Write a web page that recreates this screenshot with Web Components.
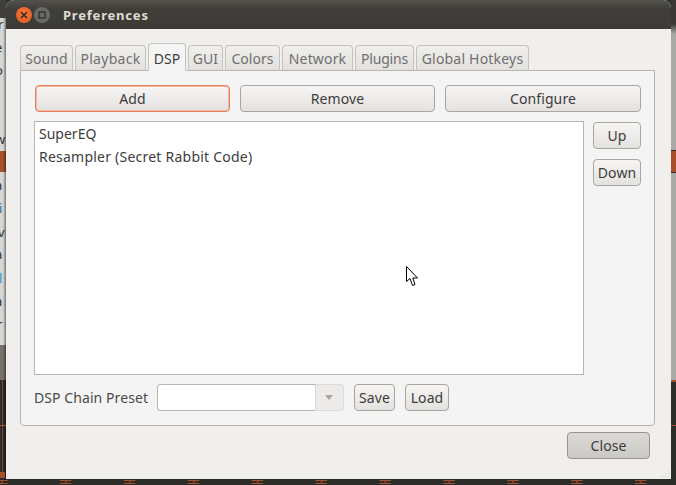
<!DOCTYPE html>
<html><head><meta charset="utf-8"><style>
html,body{margin:0;padding:0;background:#2c2c2a;}
body{width:676px;height:485px;overflow:hidden;font-family:"Noto Sans","Open Sans",sans-serif;}
</style></head><body>
<desk-top>
  <pref-window title="Preferences">
    <note-book>
      <nb-tab style="width:53px">Sound</nb-tab><nb-tab style="width:71px;letter-spacing:.3px">Playback</nb-tab><nb-tab active style="width:38px">DSP</nb-tab><nb-tab style="width:35px">GUI</nb-tab><nb-tab style="width:55px">Colors</nb-tab><nb-tab style="width:71px;letter-spacing:.15px">Network</nb-tab><nb-tab style="width:59px;letter-spacing:-.2px">Plugins</nb-tab><nb-tab style="width:113px;letter-spacing:.2px">Global Hotkeys</nb-tab>
      <dsp-page slot="page"></dsp-page>
    </note-book>
    <gtk-button slot="actions" hover style="width:83px">Close</gtk-button>
  </pref-window>
</desk-top>
<script>
const def=(n,html,extra)=>customElements.define(n,class extends HTMLElement{
  constructor(){super();this.attachShadow({mode:'open'}).innerHTML=html;if(extra)extra.call(this);}
});
def('desk-top',`<style>
:host{display:block;position:relative;width:676px;height:485px;overflow:hidden;background:#2c2c2a;}
.l,.r{position:absolute;top:0;height:485px;overflow:hidden;}
.l{left:0;width:6px;background:linear-gradient(#3f3e3a 0 18px,#d6d6d4 18px 345px,#77736c 345px 380px,#2c2c2a 380px);}
.r{left:671px;width:5px;background:linear-gradient(#3a3936 0 24px,#a9a9a7 34px 380px,#2c2c2a 380px);}
.band{position:absolute;left:0;width:100%;top:151px;height:21px;background:#a8502c;}
.r .band{box-shadow:0 1px 0 #3a2a20,0 -1px 0 #3a2a20;}
.frag{position:absolute;font:13px "Noto Sans",sans-serif;color:#333;line-height:16px;}
.tick{position:absolute;height:1px;background:#a8502c;left:0;width:100%;}
.shade{position:absolute;top:18px;bottom:0;right:0;width:3px;background:linear-gradient(90deg,rgba(0,0,0,0),rgba(0,0,0,.45));}
.vert{position:absolute;left:2px;top:380px;height:92px;width:1px;background:#7a4428;}
.foot{position:absolute;left:0;top:472px;width:5px;height:6px;background:#a8502c;}
svg.bricks{position:absolute;left:0;top:479px;}
</style>
<div class="l"><div class="band"></div>
<span class="frag" style="left:-2px;top:16px">r</span><span class="frag" style="left:-5px;top:39px">e</span><span class="frag" style="left:-5px;top:62px">o</span><span class="frag" style="left:-3px;top:108px">.</span><span class="frag" style="left:-5px;top:131px">w</span><span class="frag" style="left:-5px;top:177px">a</span><span class="frag" style="left:-1px;top:200px;color:#2b6a9e">i</span><span class="frag" style="left:-2px;top:224px">v</span><span class="frag" style="left:-5px;top:246px">a</span><span class="frag" style="left:-1px;top:270px;color:#2f8fd0">l</span><span class="frag" style="left:-5px;top:293px">a</span><span class="frag" style="left:-3px;top:316px">r</span>
<div class="shade"></div><div class="vert"></div><div class="tick" style="top:425px"></div><div class="foot"></div></div>
<div class="r"><div class="band"></div><div class="tick" style="top:380px;height:2px"></div><div class="tick" style="top:425px"></div></div>
<svg class="bricks" width="676" height="6"><defs><pattern id="b" width="63.9" height="6" patternUnits="userSpaceOnUse" x="-4"><path d="M0 1.5h11.5M6 1.5v3M0 4.5h11.5" stroke="#a8502c" fill="none"/></pattern></defs><rect width="676" height="6" fill="url(#b)"/></svg>
<slot></slot>`);
def('pref-window',`<style>
:host{display:flex;flex-direction:column;position:absolute;left:6px;top:0;width:665px;height:479px;border-radius:8px 8px 0 0;overflow:hidden;background:#f0efed;color:#3c3c3c;}
.tb{flex:none;height:29px;box-sizing:border-box;background:linear-gradient(#55534e,#3f3e39 30%,#3c3b37);display:flex;align-items:center;padding-left:10px;}
.c{width:16px;height:16px;border-radius:50%;background:radial-gradient(circle at 50% 40%,#f47a3e,#e4541c);display:flex;align-items:center;justify-content:center;}
.m{width:16px;height:16px;border-radius:50%;background:#6a6964;margin-left:2px;display:flex;align-items:center;justify-content:center;}
.t{margin-left:13px;color:#dfdbd2;font-weight:700;font-size:13px;letter-spacing:.8px;}
.b{flex:1;display:flex;flex-direction:column;padding:15px 16px 20px 14px;min-height:0;}
.a{display:flex;justify-content:flex-end;padding-top:6px;padding-right:5px;}
.grip{position:absolute;right:1px;bottom:1px;}
</style>
<div class="tb"><div class="c"><svg width="8" height="8" viewBox="0 0 8 8"><path d="M1 1l6 6M7 1l-6 6" stroke="#3a2a20" stroke-width="1.6"/></svg></div>
<div class="m"><svg width="8" height="8" viewBox="0 0 8 8"><rect x="1" y="1" width="6" height="6" fill="none" stroke="#33322f" stroke-width="1.4"/></svg></div>
<div class="t" id="t"></div></div>
<div class="b"><slot></slot><div class="a"><slot name="actions"></slot></div></div>
<svg class="grip" width="9" height="9"><g fill="#cfcdc8"><rect x="7" y="1" width="1" height="1"/><rect x="4" y="4" width="1" height="1"/><rect x="7" y="4" width="1" height="1"/><rect x="1" y="7" width="1" height="1"/><rect x="4" y="7" width="1" height="1"/><rect x="7" y="7" width="1" height="1"/></g></svg>`,
function(){this.shadowRoot.getElementById('t').textContent=this.getAttribute('title');this.removeAttribute('title');});
def('note-book',`<style>
:host{display:flex;flex-direction:column;flex:1;min-height:0;}
.tabs{display:flex;gap:2px;height:27px;align-items:flex-end;position:relative;z-index:1;margin-bottom:-1px;}
.p{flex:1;min-height:0;border:1px solid #b9b5ae;border-radius:0 0 4px 4px;background:#f4f4f4;box-sizing:border-box;display:flex;}
</style><div class="tabs"><slot></slot></div><div class="p"><slot name="page"></slot></div>`);
def('nb-tab',`<style>
:host{display:block;box-sizing:border-box;height:26px;border:1px solid #c6c2bc;border-bottom-color:#b9b5ae;border-radius:4px 4px 0 0;background:linear-gradient(#f0efed,#e3e1de);color:#6f6f6f;font-size:14px;line-height:26px;white-space:nowrap;text-align:center;letter-spacing:.06px;}
:host([active]){height:28px;background:#f4f4f4;border-bottom-color:#f4f4f4;color:#3c3c3c;line-height:29px;}
</style><slot></slot>`);
def('gtk-button',`<style>
:host{display:flex;box-sizing:border-box;height:27px;align-items:center;justify-content:center;border:1px solid #aaa69f;border-radius:4px;background:linear-gradient(#f6f5f4,#e4e2df);color:#3c3c3c;font-size:14px;white-space:nowrap;letter-spacing:.1px;}
:host([focus]){border-color:#e2805c;box-shadow:inset 0 0 0 1px #f2b9a2;}
:host([hover]){background:linear-gradient(#dcdad7,#cbc9c6);border-color:#98948d;}
</style><slot></slot>`);
def('dsp-page',`<style>
:host{display:grid;flex:1;grid-template-columns:550px 1fr;grid-template-rows:27px 254px 27px;row-gap:9px;column-gap:9px;padding:14px 13px 0 13px;box-sizing:border-box;}
.top{grid-column:1/3;display:grid;grid-template-columns:195px 195px 196px;gap:10px;margin-left:1px;}
.list{border:1px solid #b9b5ae;background:#fff;padding:0 4px;font-size:14px;color:#3c3c3c;line-height:23px;box-sizing:border-box;}
.list div+div{letter-spacing:.23px;}
.side{display:flex;flex-direction:column;gap:10px;padding-top:1px;}
.row{grid-column:1/3;display:flex;align-items:center;}
.lab{width:123px;font-size:14px;color:#4a4a4a;letter-spacing:.08px;}
.combo{display:flex;width:187px;height:27px;box-sizing:border-box;}
.e{flex:1;background:#fff;border:1px solid #b9b5ae;border-right:1px solid #d8d6d2;border-radius:4px 0 0 4px;}
.arrow{width:27px;border:1px solid #dddbd7;border-left:0;border-radius:0 4px 4px 0;background:#ecebe9;display:flex;align-items:center;justify-content:center;}
</style>
<div class="top"><gtk-button focus>Add</gtk-button><gtk-button>Remove</gtk-button><gtk-button>Configure</gtk-button></div>
<div class="list"><div>SuperEQ</div><div>Resampler (Secret Rabbit Code)</div></div>
<div class="side"><gtk-button>Up</gtk-button><gtk-button>Down</gtk-button></div>
<div class="row"><div class="lab">DSP Chain Preset</div><div class="combo"><div class="e"></div><div class="arrow"><svg width="9" height="5"><path d="M0 0h8L4 5z" fill="#a9a7a3"/></svg></div></div>
<gtk-button style="width:41px;margin-left:10px">Save</gtk-button><gtk-button style="width:44px;margin-left:10px">Load</gtk-button></div>
<mouse-cursor></mouse-cursor>`);
def('mouse-cursor',`<style>:host{position:absolute;left:400px;top:266px;width:13px;height:21px;display:block;}</style>
<svg width="13" height="21" viewBox="0 0 13 21"><path d="M.5.5V15.5L4 12.5 6.5 19.5 9 18.5 6.8 12H11.5z" fill="#fff" stroke="#000" stroke-linejoin="round"/></svg>`);
</script>
</body></html>
